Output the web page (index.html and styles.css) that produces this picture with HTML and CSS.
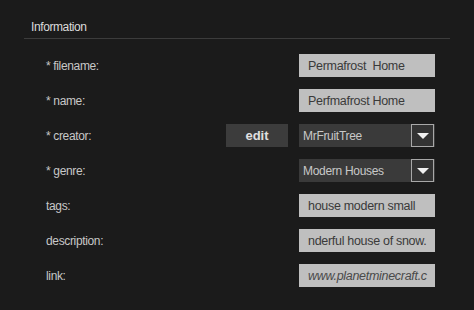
FILE: index.html
```html
<!DOCTYPE html>
<html>
<head>
    <title>Information</title>
    <link rel="stylesheet" href="styles.css">
</head>
<body>
    <div class="panel">
        <h3 class="panel-title">Information</h3>

        <div class="form">
            <label class="field-label">* filename:</label>
            <span></span>
            <input class="text-field" type="text" value="Permafrost  Home">

            <label class="field-label">* name:</label>
            <span></span>
            <input class="text-field" type="text" value="Perfmafrost Home">

            <label class="field-label">* creator:</label>
            <button class="edit-btn">edit</button>
            <div class="dropdown">
                <span class="dropdown-value">MrFruitTree</span>
                <span class="dropdown-arrow"></span>
            </div>

            <label class="field-label">* genre:</label>
            <span></span>
            <div class="dropdown">
                <span class="dropdown-value">Modern Houses</span>
                <span class="dropdown-arrow"></span>
            </div>

            <label class="field-label">tags:</label>
            <span></span>
            <input class="text-field" type="text" value="house modern small">

            <label class="field-label">description:</label>
            <span></span>
            <input class="text-field" type="text" value="nderful house of snow.">

            <label class="field-label">link:</label>
            <span></span>
            <input class="text-field link-field" type="text" value="www.planetminecraft.c">
        </div>
    </div>
</body>
</html>
```

FILE: styles.css
```css
body {
    margin: 0;
    background-color: #1b1b1b;
    font-family: "Liberation Sans", Arial, sans-serif;
    letter-spacing: -0.3px;
}
.panel {
    margin: 0 24px;
    padding-top: 17px;
}
.panel-title {
    margin: 0;
    padding: 0 0 1px 7px;
    font-size: 12px;
    font-weight: normal;
    line-height: 20px;
    letter-spacing: -0.4px;
    color: #dcdcdc;
    border-bottom: 1px solid #3c3c3c;
}
.form {
    display: grid;
    grid-template-columns: 1fr 62px 136px;
    grid-auto-rows: 23px;
    column-gap: 11px;
    row-gap: 12px;
    padding: 15px 15px 0 22px;
}
.field-label {
    align-self: center;
    font-size: 12px;
    letter-spacing: -0.35px;
    color: #c8c8c8;
}
.text-field {
    box-sizing: border-box;
    width: 136px;
    height: 23px;
    padding: 0 0 0 9px;
    border: none;
    outline: none;
    background-color: #bfbfbf;
    color: #3a3a3a;
    font-family: "Liberation Sans", Arial, sans-serif;
    font-size: 12.5px;
    letter-spacing: -0.3px;
}
.link-field {
    font-style: italic;
    color: #4a4a4a;
}
.edit-btn {
    height: 23px;
    padding: 0;
    border: none;
    background-color: #3c3c3c;
    color: #e0e0e0;
    font-family: "Liberation Sans", Arial, sans-serif;
    font-size: 13px;
    font-weight: bold;
    cursor: pointer;
}
.dropdown {
    display: flex;
    align-items: center;
    height: 23px;
    background-color: #3a3a3a;
}
.dropdown-value {
    flex: 1;
    padding-left: 4px;
    font-size: 12px;
    color: #c8c8c8;
}
.dropdown-arrow {
    box-sizing: border-box;
    width: 23px;
    height: 23px;
    margin-right: 1px;
    border: 1px solid #a8a8a8;
    background-color: #333;
    display: flex;
    align-items: center;
    justify-content: center;
}
.dropdown-arrow::after {
    content: "";
    border-left: 6px solid transparent;
    border-right: 6px solid transparent;
    border-top: 6px solid #f0f0f0;
}
```
